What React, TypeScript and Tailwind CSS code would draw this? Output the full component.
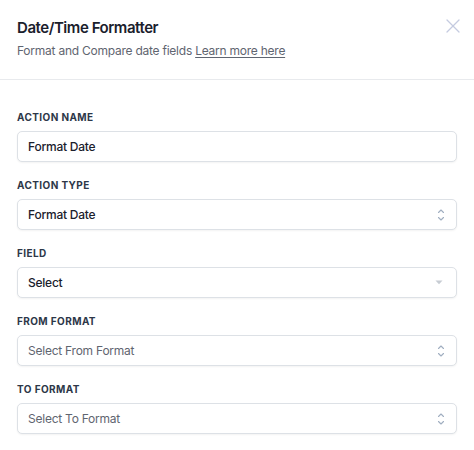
import { X } from "lucide-react";

const UpDown = () => (
  <svg width="10" height="14" viewBox="0 0 10 14" fill="none" className="text-[#a0aec0]">
    <path d="M2.5 4.5 L5 2 L7.5 4.5" stroke="currentColor" strokeWidth="1.1" strokeLinecap="round" strokeLinejoin="round" />
    <path d="M2.5 9.5 L5 12 L7.5 9.5" stroke="currentColor" strokeWidth="1.1" strokeLinecap="round" strokeLinejoin="round" />
  </svg>
);

const Caret = () => (
  <svg width="8" height="5" viewBox="0 0 8 5" className="text-[#c7ccd3]">
    <path d="M0.5 0.5 L7.5 0.5 L4 4.2 Z" fill="currentColor" />
  </svg>
);

type FieldProps = {
  label: string;
  value: string;
  placeholder?: boolean;
  icon?: "updown" | "caret";
};

const Field = ({ label, value, placeholder, icon }: FieldProps) => (
  <div className="mb-[15px]">
    <div className="mb-[6px] text-[10px] font-bold uppercase leading-4 tracking-[0.04em] text-[#2d3748]">
      {label}
    </div>
    <div
      className={
        icon === "caret"
          ? "flex h-[31px] items-center justify-between rounded-[5px] border border-[#dde1e6] bg-white pl-[10px] pr-[13px] shadow-[0_1px_2px_rgba(0,0,0,0.05)]"
          : "flex h-[31px] items-center justify-between rounded-[5px] border border-[#dde1e6] bg-white pl-[10px] pr-[10px] shadow-[0_1px_2px_rgba(0,0,0,0.05)]"
      }
    >
      <span
        className={
          placeholder
            ? "text-[12px] tracking-[-0.02em] text-[#5f6570]"
            : "text-[12px] font-medium tracking-[-0.02em] text-[#1a202c]"
        }
      >
        {value}
      </span>
      {icon === "updown" && <UpDown />}
      {icon === "caret" && <Caret />}
    </div>
  </div>
);

export default function App() {
  return (
    <div
      className="h-[450px] w-[474px] bg-white"
      style={{ fontFamily: "Inter, 'Noto Sans', sans-serif" }}
    >
      <div className="flex h-[80px] items-start justify-between border-b border-[#e8eaed] px-[17px] pt-[16px]">
        <div>
          <h2 className="text-[15px] font-semibold leading-6 tracking-[-0.03em] text-[#1a202c]">
            Date/Time Formatter
          </h2>
          <p className="mt-px text-[12px] leading-5 tracking-[-0.02em] text-[#5f6570]">
            Format and Compare date fields{" "}
            <a className="underline underline-offset-2 text-[#5f6570]">Learn more here</a>
          </p>
        </div>
        <button type="button" className="mt-[-2px] mr-[-8px] text-[#c5cbe0]">
          <X className="h-6 w-6" strokeWidth={1.3} />
        </button>
      </div>

      <div className="px-[17px] pt-[29px]">
        <Field label="Action Name" value="Format Date" />
        <Field label="Action Type" value="Format Date" icon="updown" />
        <Field label="Field" value="Select" icon="caret" />
        <Field label="From Format" value="Select From Format" placeholder icon="updown" />
        <Field label="To Format" value="Select To Format" placeholder icon="updown" />
      </div>
    </div>
  );
}
